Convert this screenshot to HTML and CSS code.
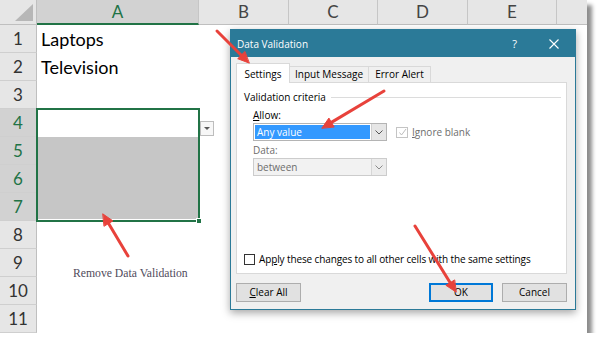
FILE: index.html
```html
<!DOCTYPE html>
<html>
<head>
<meta charset="utf-8" />
<title>Remove Data Validation</title>
<link rel="stylesheet" href="styles.css">
</head>
<body>
<div class="sheet">
  <div class="heads">
    <div class="corner">
      <svg width="36" height="24" viewBox="0 0 36 24"><polygon points="15,21 33,4 33,21" fill="#b7b7b7"/></svg>
    </div>
    <div class="col-head col-a on">A</div>
    <div class="col-head col-b">B</div>
    <div class="col-head col-c">C</div>
    <div class="col-head col-d">D</div>
    <div class="col-head col-e">E</div>
    <div class="col-head col-f"></div>
  </div>
  <div class="sheet-body">
    <div class="rownums">
      <div class="rn">1</div>
      <div class="rn">2</div>
      <div class="rn">3</div>
      <div class="rn on">4</div>
      <div class="rn on">5</div>
      <div class="rn on">6</div>
      <div class="rn on">7</div>
      <div class="rn">8</div>
      <div class="rn">9</div>
      <div class="rn">10</div>
      <div class="rn">11</div>
    </div>
    <div class="cells">
      <div class="cell row-1">Laptops</div>
      <div class="cell row-2">Television</div>
      <div class="sel">
        <div class="sel-active"></div>
        <div class="sel-fill"></div>
        <div class="handle"></div>
      </div>
      <div class="dd"></div>
      <div class="note">Remove Data Validation</div>
    </div>
  </div>

  <div class="dialog">
    <div class="dlg-title">
      <span>Data Validation</span>
      <span class="help">?</span>
      <svg class="close" width="10" height="10" viewBox="0 0 10 10"><path d="M0.5 0.5 L9.5 9.5 M9.5 0.5 L0.5 9.5" stroke="#fff" stroke-width="1.1"/></svg>
    </div>
    <div class="dlg-body">
      <div class="tabs">
        <div class="tab on tab-settings">Settings</div>
        <div class="tab tab-input">Input Message</div>
        <div class="tab tab-error">Error Alert</div>
      </div>
      <div class="panel">
        <div class="group-label"><span>Validation criteria</span><div class="rule"></div></div>
        <div class="field-label"><u>A</u>llow:</div>
        <div class="field-row">
          <div class="combo">
            <div class="combo-value"><span class="hilite">Any value</span></div>
            <div class="combo-btn">
              <svg width="8" height="5" viewBox="0 0 8 5"><polyline points="0.5,0.5 4,4 7.5,0.5" fill="none" stroke="#555" stroke-width="1"/></svg>
            </div>
          </div>
          <div class="check disabled">
            <span class="box">
              <svg width="9" height="9" viewBox="0 0 9 9"><polyline points="1.5,4.5 3.5,7 8,1" fill="none" stroke="#bdbdbd" stroke-width="1"/></svg>
            </span>
            <span><u>I</u>gnore blank</span>
          </div>
        </div>
        <div class="field-label muted">Data:</div>
        <div class="field-row">
          <div class="combo off">
            <div class="combo-value">between</div>
            <div class="combo-btn">
              <svg width="8" height="5" viewBox="0 0 8 5"><polyline points="0.5,0.5 4,4 7.5,0.5" fill="none" stroke="#8a8a8a" stroke-width="1"/></svg>
            </div>
          </div>
        </div>
        <div class="check apply">
          <span class="box"></span>
          <span class="apply-text">Ap<u>p</u>ly these changes to all other cells with the same settings</span>
        </div>
      </div>
      <div class="buttons">
        <div class="btn"><u>C</u>lear All</div>
        <div class="btn default">OK</div>
        <div class="btn">Cancel</div>
      </div>
    </div>
  </div>
</div>

<svg class="arrows" width="600" height="346" viewBox="0 0 600 346">
  <g stroke="#e8423b" stroke-width="3" stroke-linecap="round" fill="#e8423b">
    <line x1="217" y1="31" x2="241" y2="55"/>
    <polygon points="249,63 237.7,58.7 244.7,51.7" stroke-width="1"/>
    <line x1="384" y1="91" x2="331.4" y2="122.4"/>
    <polygon points="322,128 328.9,118.1 334,126.7" stroke-width="1"/>
    <line x1="128" y1="256" x2="108.6" y2="223.5"/>
    <polygon points="103,214 112.9,220.9 104.3,226.1" stroke-width="1"/>
    <line x1="415" y1="226" x2="450.2" y2="282.7"/>
    <polygon points="456,292 445.9,285.3 454.4,280.1" stroke-width="1"/>
  </g>
</svg>
</body>
</html>
```

FILE: styles.css
```css
* {
  box-sizing: border-box;
}
body {
  margin: 0;
  background: #fff;
  font-family: Lato, "Liberation Sans", sans-serif;
}
.sheet {
  position: relative;
  width: 587px;
  height: 333px;
  background: #fff;
  box-shadow: 5px 5px 4px rgba(0, 0, 0, 0.45);
}

/* column headers */
.heads {
  display: flex;
  height: 25px;
  background: #e6e6e6;
}
.corner {
  width: 37px;
  border-right: 1px solid #bfbfbf;
  border-bottom: 1px solid #bfbfbf;
}
.corner svg {
  display: block;
}
.col-head {
  border-right: 1px solid #c6c6c6;
  border-bottom: 1px solid #bfbfbf;
  text-align: center;
  font-size: 17px;
  line-height: 24px;
  color: #444;
}
.col-head.on {
  background: #d2d2d2;
  color: #217346;
  border-bottom: 2px solid #217346;
}
.col-a { width: 162px; }
.col-b { width: 90px; }
.col-c { width: 89px; }
.col-d { width: 90px; }
.col-e { width: 89px; }
.col-f { width: 30px; border-right: none; }

/* body */
.sheet-body {
  display: flex;
}
.rownums {
  width: 37px;
}
.rn {
  height: 28px;
  background: #e6e6e6;
  border-right: 1px solid #bfbfbf;
  border-bottom: 1px solid #cfcfcf;
  text-align: center;
  font-size: 17px;
  line-height: 27px;
  color: #333;
}
.rn.on {
  background: #d2d2d2;
  color: #217346;
}
.cells {
  display: grid;
  grid-template-columns: 162px 90px 89px 90px 89px 30px;
  grid-template-rows: repeat(11, 28px);
}
.cell {
  grid-column: 1;
  padding-left: 4px;
  font-size: 18px;
  line-height: 28px;
  color: #000;
}
.row-1 { grid-row: 1; }
.row-2 { grid-row: 2; }

.sel {
  grid-column: 1;
  grid-row: 4 / 8;
  margin: -1px;
  border: 2px solid #217346;
  position: relative;
  display: flex;
  flex-direction: column;
  z-index: 1;
}
.sel-active {
  height: 27px;
  background: #fff;
}
.sel-fill {
  flex: 1;
  background: #c6c6c6;
  margin-bottom: 1px;
}
.handle {
  position: absolute;
  right: -4px;
  bottom: -4px;
  width: 6px;
  height: 6px;
  background: #217346;
  border: 1px solid #fff;
}
.dd {
  grid-column: 2;
  grid-row: 4;
  margin: 12px 0 0 1px;
  width: 14px;
  height: 15px;
  border: 1px solid #bdbdbd;
  background: #f7f7f7;
  display: flex;
  align-items: center;
  justify-content: center;
}
.dd::after {
  content: "";
  border-left: 3px solid transparent;
  border-right: 3px solid transparent;
  border-top: 3px solid #595959;
}
.note {
  grid-column: 1 / 3;
  grid-row: 9 / 11;
  padding: 18px 0 0 36px;
  font-family: "Liberation Serif", serif;
  font-size: 11.7px;
  line-height: 14px;
  color: #504b5c;
  white-space: nowrap;
}

/* dialog */
.dialog {
  position: absolute;
  left: 230px;
  top: 29px;
  width: 346px;
  height: 281px;
  border: 1px solid #2b7a98;
  background: #f0f0f0;
  box-shadow: 0 3px 8px rgba(0, 0, 0, 0.35);
  font-family: "Open Sans", sans-serif;
  font-size: 10px;
  color: #000;
  display: flex;
  flex-direction: column;
  z-index: 2;
}
.dlg-title {
  height: 27px;
  background: #2b7a98;
  color: #fff;
  display: flex;
  align-items: center;
  padding: 0 16px 0 6px;
}
.help {
  margin-left: auto;
  margin-right: 32px;
  font-size: 11px;
}
.dlg-body {
  flex: 1;
  display: flex;
  flex-direction: column;
  padding: 6px 8px 0 5px;
}
.tabs {
  display: flex;
  align-items: flex-end;
  height: 19px;
}
.tab {
  height: 16px;
  border: 1px solid #d9d9d9;
  border-bottom: none;
  background: #f0f0f0;
  text-align: center;
  line-height: 15px;
}
.tab.on {
  height: 20px;
  margin-bottom: -1px;
  background: #fff;
  line-height: 19px;
  padding-top: 1px;
  position: relative;
  z-index: 1;
}
.tab-settings { width: 54px; }
.tab-input { width: 80px; margin-left: -1px; }
.tab-error { width: 63px; margin-left: -1px; }

.panel {
  height: 192px;
  background: #fff;
  border: 1px solid #d9d9d9;
  padding: 7px 5px 0 7px;
  display: flex;
  flex-direction: column;
}
.group-label {
  display: flex;
  align-items: center;
  height: 14px;
}
.rule {
  flex: 1;
  height: 1px;
  margin-left: 5px;
  background: #dcdcdc;
}
.field-label {
  margin: 4px 0 1px 9px;
  line-height: 14px;
}
.field-label.muted {
  margin-top: 2px;
  color: #6d6d6d;
}
.field-row {
  display: flex;
  align-items: center;
  margin-left: 9px;
}
.combo {
  width: 134px;
  height: 18px;
  border: 1px solid #b4b4b4;
  background: #fff;
  display: flex;
}
.combo-value {
  flex: 1;
  padding: 1px;
  line-height: 14px;
}
.hilite {
  display: block;
  height: 14px;
  background: #3399ff;
  color: #fff;
  padding-left: 2px;
}
.combo-btn {
  width: 15px;
  border-left: 1px solid #cfcfcf;
  background: #e6e6e6;
  display: flex;
  align-items: center;
  justify-content: center;
}
.combo-btn svg {
  display: block;
}
.combo.off {
  border-color: #cccccc;
  background: #f2f2f2;
}
.combo.off .combo-value {
  padding: 1px 3px;
  color: #6d6d6d;
}
.combo.off .combo-btn {
  background: #ececec;
  border-left-color: #d6d6d6;
}
.check {
  display: flex;
  align-items: center;
  gap: 4px;
  line-height: 12px;
}
.check .box {
  width: 11px;
  height: 11px;
  border: 1px solid #333;
  background: #fff;
  display: flex;
  align-items: center;
  justify-content: center;
}
.check.disabled {
  margin-left: 9px;
  color: #6d6d6d;
}
.check.disabled .box {
  width: 12px;
  border-color: #c4c4c4;
}
.check.apply {
  margin-top: auto;
  margin-bottom: 8px;
}
.apply-text {
  letter-spacing: -0.12px;
}

.buttons {
  display: flex;
  margin-top: 9px;
}
.btn {
  width: 65px;
  height: 19px;
  border: 1px solid #adadad;
  background: #e1e1e1;
  text-align: center;
  line-height: 17px;
}
.btn.default {
  width: 64px;
  margin-left: auto;
  margin-right: 9px;
  border: 2px solid #0078d7;
  line-height: 15px;
}

.arrows {
  position: absolute;
  left: 0;
  top: 0;
  z-index: 5;
  pointer-events: none;
}
```
